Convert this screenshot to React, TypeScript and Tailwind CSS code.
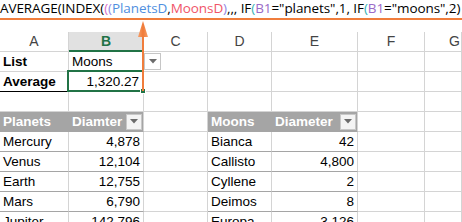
import React from "react";

const cellFont = { fontFamily: '"Liberation Sans", Arial, sans-serif' };

function Caret({ className = "" }: { className?: string }) {
  return (
    <svg width="8" height="5" viewBox="0 0 8 5" className={className}>
      <path d="M0 0h8L4 4.5z" fill="#6b6b6b" />
    </svg>
  );
}

function FilterButton() {
  return (
    <div className="flex h-[16px] w-[16px] items-center justify-center border border-[#c8c8c8] bg-[#f4f4f4]">
      <Caret />
    </div>
  );
}

function Formula() {
  return (
    <div
      className="h-[18px] overflow-hidden whitespace-nowrap text-[13.5px] leading-[17px] tracking-[-0.08px] text-black"
      style={{ fontFamily: '"Open Sans", "Noto Sans", sans-serif' }}
    >
      AVERAGE(INDEX(
      <span className="text-[#dc6fc8]">(</span>
      <span className="text-[#8f87e4]">(</span>
      <span className="text-[#4f8fe0]">PlanetsD</span>,
      <span className="text-[#f05468]">MoonsD</span>
      <span className="text-[#8f87e4]">)</span>,,, IF
      <span className="text-[#35b3b3]">(</span>
      <span className="text-[#9a6ac8]">B1</span>="planets",1, IF
      <span className="text-[#35b3b3]">(</span>
      <span className="text-[#9a6ac8]">B1</span>="moons",2)
    </div>
  );
}

const grid = "border-r border-b border-[#d4d4d4]";
const rowLine = "border-r border-b border-r-[#d4d4d4] border-b-[#a5a5a5]";

export default function App() {
  const planets = [
    ["Mercury", "4,878"],
    ["Venus", "12,104"],
    ["Earth", "12,755"],
    ["Mars", "6,790"],
    ["Jupiter", "142,796"],
  ];
  const moons = [
    ["Bianca", "42"],
    ["Callisto", "4,800"],
    ["Cyllene", "2"],
    ["Deimos", "8"],
    ["Europa", "3,126"],
  ];

  return (
    <div className="relative h-[222px] w-[462px] overflow-hidden bg-white" style={cellFont}>
      <Formula />
      <div className="h-[14px] border-t-2 border-[#f07d3c]" />

      {/* column headers */}
      <div className="flex h-5 text-[14px] leading-[19px] text-[#444]">
        <div className={`w-[69px] text-center ${grid}`}>A</div>
        <div className="w-[75px] border-r border-b-2 border-r-[#d4d4d4] border-b-[#217346] bg-[#e1e1e1] text-center font-bold text-[#217346]">
          B
        </div>
        <div className={`w-[64px] text-center ${grid}`}>C</div>
        <div className={`w-[64px] text-center ${grid}`}>D</div>
        <div className={`w-[86px] text-center ${grid}`}>E</div>
        <div className={`w-[67px] text-center ${grid}`}>F</div>
        <div className={`flex-1 pl-[24px] ${grid}`}>G</div>
      </div>

      <div className="text-[13.5px] leading-[20px] text-black">
        {/* row 1 */}
        <div className="flex h-5">
          <div className={`w-[69px] pl-[3px] font-bold ${grid}`}>List</div>
          <div className={`relative w-[75px] pl-[3px] ${grid}`}>
            Moons
            <div className="absolute top-[1px] left-full z-10 ml-[1px] flex h-[17px] w-[17px] items-center justify-center border border-[#c6c6c6] bg-white">
              <Caret />
            </div>
          </div>
          <div className={`w-[64px] ${grid}`} />
          <div className={`w-[64px] ${grid}`} />
          <div className={`w-[86px] ${grid}`} />
          <div className={`w-[67px] ${grid}`} />
          <div className={`flex-1 ${grid}`} />
        </div>

        {/* row 2 */}
        <div className="flex h-5">
          <div className="w-[69px] border-r border-b border-r-[#d4d4d4] border-b-black pl-[3px] font-bold">
            Average
          </div>
          <div className={`relative w-[75px] pr-[4px] text-right ${grid}`}>
            1,320.27
            <div className="absolute -top-[2px] -left-[2px] h-[22px] w-[77px] border-2 border-[#217346]" />
            <div className="absolute -right-[3px] -bottom-[3px] h-[6px] w-[6px] border border-white bg-[#217346]" />
          </div>
          <div className={`w-[64px] ${grid}`} />
          <div className={`w-[64px] ${grid}`} />
          <div className={`w-[86px] ${grid}`} />
          <div className={`w-[67px] ${grid}`} />
          <div className={`flex-1 ${grid}`} />
        </div>

        {/* row 3 */}
        <div className="flex h-5">
          <div className={`w-[69px] ${grid}`} />
          <div className={`w-[75px] ${grid}`} />
          <div className={`w-[64px] ${grid}`} />
          <div className={`w-[64px] ${grid}`} />
          <div className={`w-[86px] ${grid}`} />
          <div className={`w-[67px] ${grid}`} />
          <div className={`flex-1 ${grid}`} />
        </div>

        {/* table headers */}
        <div className="flex h-5 font-bold text-white">
          <div className="w-[69px] border-r border-b border-r-[#a5a5a5] border-b-[#a5a5a5] bg-[#a5a5a5] pl-[3px]">
            Planets
          </div>
          <div className="flex w-[75px] items-center justify-between border-r border-b border-r-[#d4d4d4] border-b-[#a5a5a5] bg-[#a5a5a5] pr-[1px] pl-[3px]">
            <span>Diamter</span>
            <FilterButton />
          </div>
          <div className={`w-[64px] ${grid}`} />
          <div className="w-[64px] border-r border-b border-r-[#a5a5a5] border-b-[#a5a5a5] bg-[#a5a5a5] pl-[3px]">
            Moons
          </div>
          <div className="flex w-[86px] items-center justify-between border-r border-b border-r-[#d4d4d4] border-b-[#a5a5a5] bg-[#a5a5a5] pr-[1px] pl-[3px]">
            <span>Diameter</span>
            <FilterButton />
          </div>
          <div className={`w-[67px] ${grid}`} />
          <div className={`flex-1 ${grid}`} />
        </div>

        {planets.map((p, i) => (
          <div key={p[0]} className="flex h-5">
            <div className={`w-[69px] pl-[3px] ${rowLine}`}>{p[0]}</div>
            <div className={`w-[75px] pr-[3px] text-right ${rowLine}`}>{p[1]}</div>
            <div className={`w-[64px] ${grid}`} />
            <div className={`w-[64px] pl-[3px] ${rowLine}`}>{moons[i][0]}</div>
            <div className={`w-[86px] pr-[3px] text-right ${rowLine}`}>{moons[i][1]}</div>
            <div className={`w-[67px] ${grid}`} />
            <div className={`flex-1 ${grid}`} />
          </div>
        ))}
      </div>

      {/* arrow pointing at the formula */}
      <svg className="absolute top-[21px] left-[137px]" width="12" height="72" viewBox="0 0 12 72">
        <defs>
          <linearGradient id="ag" x1="0" x2="1" y1="0" y2="0">
            <stop offset="0" stopColor="#f6a06a" />
            <stop offset="0.5" stopColor="#f07a38" />
            <stop offset="1" stopColor="#f6a06a" />
          </linearGradient>
        </defs>
        <path d="M6 0L11 16H1z" fill="url(#ag)" />
        <rect x="5" y="15" width="2" height="55" fill="#f07d3c" />
      </svg>
    </div>
  );
}
